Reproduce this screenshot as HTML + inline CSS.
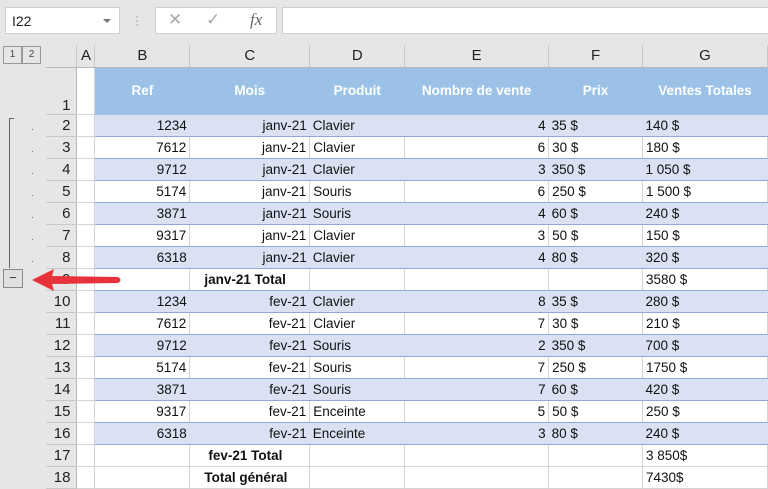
<!DOCTYPE html>
<html><head><meta charset="utf-8"><style>
*{margin:0;padding:0;box-sizing:border-box}
body{width:768px;height:488px;overflow:hidden;background:#e6e6e6;font-family:"Liberation Sans",sans-serif;position:relative}
.abs{position:absolute}
table{position:absolute;left:46px;top:45px;border-collapse:collapse;table-layout:fixed;font-size:13.5px;color:#111}
td{height:22px;padding:0 3px;white-space:nowrap;overflow:visible;border:1px solid #d4d4d4;background:#fff}
tr.h td{height:22px;background:#e6e6e6;text-align:center;font-size:15px;color:#222;border:none;border-right:1px solid #c8c8c8;border-bottom:1px solid #b8b8b8}
td.rh{background:#e6e6e6;text-align:right;font-size:15px;color:#222;border:none;border-right:1px solid #b8b8b8;border-bottom:1px solid #c8c8c8;padding-right:6px}
tr.t td.c{background:#9bc2e6;color:#fff;font-weight:bold;border-color:#9bc2e6;height:47px;vertical-align:middle}
tr.b td.c{background:#d9e1f2;border-top:1px solid #8ea9db;border-bottom:1px solid #8ea9db;border-left:none;border-right:none}
tr.w td.c{border-top:1px solid #8ea9db;border-bottom:1px solid #8ea9db;border-left:1px solid #d4d4d4;border-right:1px solid #d4d4d4}
td.a{border-right:1px solid #d4d4d4}
.r{text-align:right}.bd{font-weight:bold}
</style></head><body>
<div class="abs" style="left:5px;top:7px;width:115px;height:27px;background:#fff;border:1px solid #d0d0d0;font-size:14px;padding:5px 6px;color:#222">I22<span style="position:absolute;right:8px;top:11px;border:4px solid transparent;border-top:4px solid #777"></span></div>
<div class="abs" style="left:135px;top:14px;color:#999;font-size:12px;line-height:4px">·<br>·<br>·</div>
<div class="abs" style="left:155px;top:7px;width:122px;height:27px;background:#fff;border:1px solid #d0d0d0;color:#aaa;font-size:17px">
<span class="abs" style="left:12px;top:2px">✕</span><span class="abs" style="left:50px;top:2px">✓</span><span class="abs" style="left:94px;top:2px;font-family:'Liberation Serif',serif;font-style:italic;color:#666">fx</span></div>
<div class="abs" style="left:282px;top:7px;width:490px;height:27px;background:#fff;border:1px solid #d0d0d0"></div>
<div class="abs" style="left:3px;top:46px;width:19px;height:18px;border:1px solid #999;font-size:10px;color:#444;text-align:center;line-height:16px">1</div>
<div class="abs" style="left:22px;top:46px;width:19px;height:18px;border:1px solid #999;font-size:10px;color:#444;text-align:center;line-height:16px">2</div>
<div class="abs" style="left:60px;top:50px;width:0;height:0;border-left:14px solid transparent;border-bottom:14px solid #bbb"></div>
<div class="abs" style="left:9px;top:118px;width:5px;height:150px;border-left:1px solid #666;border-top:1px solid #666"></div>
<div class="abs" style="left:3px;top:269px;width:20px;height:19px;border:1px solid #888;background:#e0e0e0;text-align:center;font-size:13px;line-height:16px;color:#333">−</div>
<div class="abs" style="left:31px;top:118px;color:#666;font-size:9px;line-height:22px">·<br>·<br>·<br>·<br>·<br>·<br>·</div>
<table>
<colgroup><col style="width:31px"><col style="width:18px"><col style="width:95px"><col style="width:120px"><col style="width:95px"><col style="width:144px"><col style="width:94px"><col style="width:125px"></colgroup>
<tr class="h"><td></td><td>A</td><td>B</td><td>C</td><td>D</td><td>E</td><td>F</td><td>G</td></tr>
<tr class="t"><td class="rh" style="vertical-align:bottom">1</td><td class="a"></td><td class="c" style="text-align:center">Ref</td><td class="c" style="text-align:center">Mois</td><td class="c" style="text-align:center">Produit</td><td class="c" style="text-align:center">Nombre de vente</td><td class="c" style="text-align:center">Prix</td><td class="c" style="text-align:center">Ventes Totales</td></tr>
<tr class="b"><td class="rh">2</td><td class="a"></td><td class="c r">1234</td><td class="c r">janv-21</td><td class="c">Clavier</td><td class="c r">4</td><td class="c">35 $</td><td class="c">140 $</td></tr>
<tr class="w"><td class="rh">3</td><td class="a"></td><td class="c r">7612</td><td class="c r">janv-21</td><td class="c">Clavier</td><td class="c r">6</td><td class="c">30 $</td><td class="c">180 $</td></tr>
<tr class="b"><td class="rh">4</td><td class="a"></td><td class="c r">9712</td><td class="c r">janv-21</td><td class="c">Clavier</td><td class="c r">3</td><td class="c">350 $</td><td class="c">1 050 $</td></tr>
<tr class="w"><td class="rh">5</td><td class="a"></td><td class="c r">5174</td><td class="c r">janv-21</td><td class="c">Souris</td><td class="c r">6</td><td class="c">250 $</td><td class="c">1 500 $</td></tr>
<tr class="b"><td class="rh">6</td><td class="a"></td><td class="c r">3871</td><td class="c r">janv-21</td><td class="c">Souris</td><td class="c r">4</td><td class="c">60 $</td><td class="c">240 $</td></tr>
<tr class="w"><td class="rh">7</td><td class="a"></td><td class="c r">9317</td><td class="c r">janv-21</td><td class="c">Clavier</td><td class="c r">3</td><td class="c">50 $</td><td class="c">150 $</td></tr>
<tr class="b"><td class="rh">8</td><td class="a"></td><td class="c r">6318</td><td class="c r">janv-21</td><td class="c">Clavier</td><td class="c r">4</td><td class="c">80 $</td><td class="c">320 $</td></tr>
<tr class="w"><td class="rh">9</td><td class="a"></td><td class="c"></td><td class="c bd" style="padding-left:14px">janv-21 Total</td><td class="c"></td><td class="c"></td><td class="c"></td><td class="c">3580 $</td></tr>
<tr class="b"><td class="rh">10</td><td class="a"></td><td class="c r">1234</td><td class="c r">fev-21</td><td class="c">Clavier</td><td class="c r">8</td><td class="c">35 $</td><td class="c">280 $</td></tr>
<tr class="w"><td class="rh">11</td><td class="a"></td><td class="c r">7612</td><td class="c r">fev-21</td><td class="c">Clavier</td><td class="c r">7</td><td class="c">30 $</td><td class="c">210 $</td></tr>
<tr class="b"><td class="rh">12</td><td class="a"></td><td class="c r">9712</td><td class="c r">fev-21</td><td class="c">Souris</td><td class="c r">2</td><td class="c">350 $</td><td class="c">700 $</td></tr>
<tr class="w"><td class="rh">13</td><td class="a"></td><td class="c r">5174</td><td class="c r">fev-21</td><td class="c">Souris</td><td class="c r">7</td><td class="c">250 $</td><td class="c">1750 $</td></tr>
<tr class="b"><td class="rh">14</td><td class="a"></td><td class="c r">3871</td><td class="c r">fev-21</td><td class="c">Souris</td><td class="c r">7</td><td class="c">60 $</td><td class="c">420 $</td></tr>
<tr class="w"><td class="rh">15</td><td class="a"></td><td class="c r">9317</td><td class="c r">fev-21</td><td class="c">Enceinte</td><td class="c r">5</td><td class="c">50 $</td><td class="c">250 $</td></tr>
<tr class="b"><td class="rh">16</td><td class="a"></td><td class="c r">6318</td><td class="c r">fev-21</td><td class="c">Enceinte</td><td class="c r">3</td><td class="c">80 $</td><td class="c">240 $</td></tr>
<tr><td class="rh">17</td><td class="a"></td><td></td><td class="bd" style="padding-left:18px">fev-21 Total</td><td></td><td></td><td></td><td>3 850$</td></tr>
<tr><td class="rh">18</td><td class="a"></td><td></td><td class="bd" style="padding-left:14px">Total général</td><td></td><td></td><td></td><td>7430$</td></tr>
</table>
<svg class="abs" style="left:28px;top:266px" width="96" height="28"><path d="M4 14 L26 3 L24 10 L90 11 Q95 14 90 17 L24 18 L26 25 Z" fill="#e8323b"/></svg>
</body></html>
